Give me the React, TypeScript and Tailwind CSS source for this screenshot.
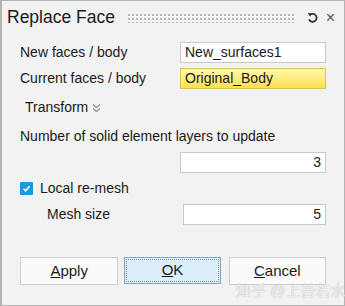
import React from "react";

const font = { fontFamily: '"Liberation Sans", Arial, "Noto Sans CJK SC", sans-serif' };

const Field = ({ value, right, yellow, w = "w-[146px]" }: { value: string; right?: boolean; yellow?: boolean; w?: string }) => (
  <div
    className={`${w} h-[21px] border px-[4px] flex items-center text-[14px] text-[#1a1a1a] ${
      right ? "justify-end" : ""
    } ${yellow ? "border-[#d9c25a] bg-gradient-to-b from-[#fff9a8] to-[#ffe04a]" : "border-[#c9c9c9] bg-white"}`}
  >
    {value}
  </div>
);

const App = () => {
  return (
    <div className="w-[345px] h-[306px] bg-[#f2f2f2] border border-[#b4b4b4] border-l-2 flex flex-col" style={font}>
      {/* Title bar */}
      <div className="h-[33px] flex items-center pl-[5px] pr-[9px]">
        <span className="text-[17.5px] text-[#1a1a1a] whitespace-nowrap shrink-0">Replace Face</span>
        <div className="ml-[12px] flex-1 h-[10px] bg-[radial-gradient(circle,#a0a0a0_0.8px,transparent_1px)] bg-[length:4px_4px] opacity-70" />
        <svg width="11" height="11" viewBox="0 0 12 12" className="ml-[12px] shrink-0">
          <path d="M3.2 3.2 A4.3 4.3 0 1 1 2.2 8" fill="none" stroke="#333" strokeWidth="2" />
          <path d="M0.8 1.2 L5.2 1.4 L3.4 5.2 Z" fill="#333" />
        </svg>
        <span className="ml-[8px] text-[16px] leading-none text-[#555] shrink-0">×</span>
      </div>

      {/* Body */}
      <div className="flex flex-col pl-[18px] pr-[18px] text-[14px] text-[#1a1a1a]">
        <div className="mt-[8px] flex items-center justify-between">
          <span>New faces / body</span>
          <Field value="New_surfaces1" />
        </div>
        <div className="mt-[5px] flex items-center justify-between">
          <span>Current faces / body</span>
          <Field value="Original_Body" yellow />
        </div>
        <div className="mt-[8px] ml-[5px] flex items-center gap-[4px]">
          <span>Transform</span>
          <svg width="9" height="10" viewBox="0 0 9 10">
            <path d="M1 1.5 L4.5 4.5 L8 1.5 M1 5.5 L4.5 8.5 L8 5.5" fill="none" stroke="#8a8a8a" strokeWidth="1.2" />
          </svg>
        </div>
        <div className="mt-[8px]">Number of solid element layers to update</div>
        <div className="mt-[5px] flex justify-end">
          <Field value="3" right />
        </div>
        <div className="mt-[5px] flex items-center gap-[7px]">
          <div className="w-[13px] h-[13px] bg-[#1a9ad8] rounded-[1px] flex items-center justify-center">
            <svg width="9" height="9" viewBox="0 0 9 9">
              <path d="M1.5 4.7 L3.6 6.8 L7.6 2.2" fill="none" stroke="white" strokeWidth="1.6" />
            </svg>
          </div>
          <span>Local re-mesh</span>
        </div>
        <div className="mt-[5px] pl-[27px] flex items-center justify-between">
          <span>Mesh size</span>
          <Field value="5" right w="w-[143px]" />
        </div>

        {/* Buttons */}
        <div className="mt-[32px] flex gap-[6px] relative">
          <button className="w-[99px] h-[28px] bg-[#fafafa] border border-[#cfcfcf] text-[15px]">
            <span className="underline">A</span>pply
          </button>
          <button className="w-[97px] h-[27px] bg-[#dbf0fb] border border-[#8aa6bb] text-[15px] outline-1 outline-dotted outline-[#7b8d99] -outline-offset-3">
            <span className="underline">O</span>K
          </button>
          <button className="ml-[2px] w-[98px] h-[28px] bg-[#fafafa] border border-[#cfcfcf] text-[15px]">
            <span className="underline">C</span>ancel
          </button>
          <span className="absolute left-[216px] top-[23px] text-[15px] text-white/80 [text-shadow:0_0_1px_#9a9a9a] whitespace-nowrap">
            知乎 @上善若水
          </span>
        </div>
      </div>
    </div>
  );
};

export default App;
